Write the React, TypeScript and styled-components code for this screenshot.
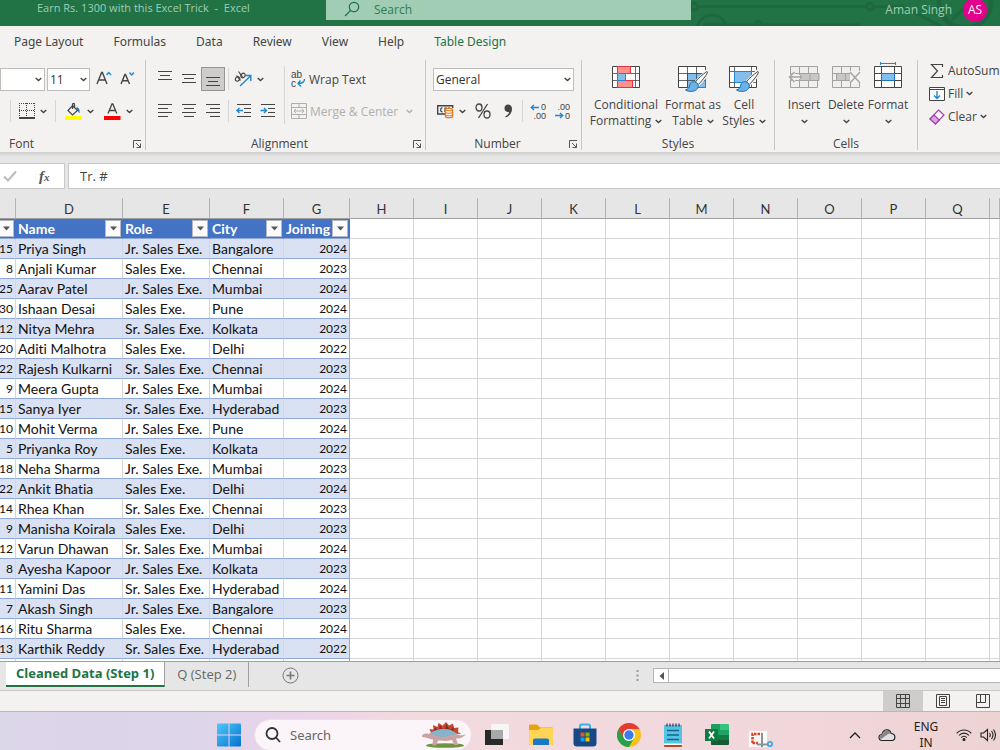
import React from "react";
import styled, { createGlobalStyle } from "styled-components";

const ui = `"Noto Sans", "Open Sans", "Liberation Sans", sans-serif`;
const narrowUi = `"Open Sans", "Noto Sans", "Liberation Sans", sans-serif`;
const sheet = `Lato, "Open Sans", "Liberation Sans", sans-serif`;

const GlobalStyle = createGlobalStyle`
  *, *::before, *::after { box-sizing: border-box; }
  body { margin: 0; overflow: hidden; font-family: ${ui}; font-size: 12px; color: #444; }
  button, input, select { font: inherit; color: inherit; margin: 0; }
  button { border: 0; background: none; padding: 0; cursor: pointer; }
  svg { display: block; flex: none; }
`;

const Window = styled.div`
  display: flex;
  flex-direction: column;
  height: 100vh;
  overflow: hidden;
  background: #e6e6e6;
`;

/* ---------- Title bar ---------- */
const TitleBar = styled.header`
  position: relative;
  display: flex;
  flex: none;
  align-items: flex-start;
  height: 26px;
  overflow: hidden;
  background: #217346;
  color: #a0cdb4;
  font-family: ${narrowUi};
  font-size: 12px;
  line-height: 16px;
`;
const Circuit = styled.svg`
  position: absolute;
  top: 0;
  right: 0;
`;
const DocTitle = styled.div`
  flex: 0 0 326px;
  padding-left: 37px;
  font-size: 11px;
  white-space: pre;
`;
const SearchField = styled.label`
  position: relative;
  display: flex;
  flex: 0 1 365px;
  align-items: center;
  gap: 14px;
  height: 20px;
  padding: 0 0 2px 18px;
  background: #a0cdb4;
  color: #217346;
  input {
    min-width: 0;
    height: 18px;
    flex: 1;
    padding: 0;
    border: 0;
    outline: 0;
    background: none;
  }
  input::placeholder { color: #2f7d52; opacity: 1; }
`;
const Account = styled.button`
  position: relative;
  display: flex;
  align-items: center;
  gap: 11px;
  height: 20px;
  margin-left: auto;
  padding-right: 13px;
`;
const Avatar = styled.span`
  width: 24px;
  height: 24px;
  border-radius: 50%;
  background: #e3008c;
  color: #fff;
  line-height: 24px;
  text-align: center;
`;

/* ---------- Ribbon ---------- */
const RibbonTabs = styled.nav`
  display: flex;
  flex: none;
  gap: 30px;
  height: 32px;
  padding: 0 0 2px 14px;
  background: #f3f2f1;
`;
const RibbonTab = styled.button<{ $active?: boolean }>`
  color: ${(p) => (p.$active ? "#217346" : "#444")};
  white-space: nowrap;
`;
const Ribbon = styled.section`
  display: flex;
  flex: none;
  height: 94px;
  padding-top: 2px;
  background: #f3f2f1;
  font-family: ${narrowUi};
`;
const RibbonEdge = styled.div`
  flex: none;
  height: 5px;
  background: linear-gradient(#cfcecd, #e6e6e6);
`;
const Group = styled.div<{ $w?: number }>`
  display: flex;
  flex-direction: column;
  flex: ${(p) => (p.$w ? `0 0 ${p.$w}px` : "1 0 0")};
  height: 90px;
  border-right: ${(p) => (p.$w ? "1px solid #c8c6c4" : "0")};
  white-space: nowrap;
`;
const GroupBody = styled.div<{ $pad?: number }>`
  display: flex;
  flex: none;
  height: 77px;
  padding-left: ${(p) => p.$pad ?? 8}px;
`;
const GroupFoot = styled.div<{ $shift?: boolean }>`
  display: flex;
  align-items: center;
  height: 14px;
  line-height: 14px;
  span {
    flex: 1;
    text-align: ${(p) => (p.$shift ? "left" : "center")};
    padding-left: ${(p) => (p.$shift ? "9px" : "0")};
  }
  svg { margin-right: 3px; }
`;
const Rows = styled.div`
  display: flex;
  flex-direction: column;
  gap: 8px;
  padding-top: 7px;
`;
const Row = styled.div<{ $gap?: number }>`
  display: flex;
  align-items: center;
  gap: ${(p) => p.$gap ?? 0}px;
  height: 24px;
`;
const Tool = styled.button<{ $w?: number; $on?: boolean }>`
  display: flex;
  flex: none;
  align-items: center;
  justify-content: center;
  gap: 5px;
  width: ${(p) => p.$w ?? 24}px;
  height: 24px;
  border: 1px solid ${(p) => (p.$on ? "#979593" : "transparent")};
  background: ${(p) => (p.$on ? "#cfcdcb" : "none")};
`;
const TextTool = styled.button`
  display: flex;
  align-items: center;
  gap: 3px;
  height: 24px;
  &:disabled { color: #b1afad; }
`;
const Rule = styled.span<{ $h?: number }>`
  flex: none;
  width: 1px;
  height: ${(p) => p.$h ?? 22}px;
  margin: 0 3px;
  background: #d8d6d4;
`;
const TallRule = styled.span`
  width: 1px;
  height: 58px;
  margin: 6px 6px 0 4px;
  background: #d8d6d4;
`;
const Picker = styled.label<{ $w: number }>`
  display: grid;
  align-items: center;
  width: ${(p) => p.$w}px;
  height: 23px;
  border: 1px solid #c0bebc;
  background: #fff;
  > * { grid-area: 1 / 1; }
  > svg { justify-self: end; margin-right: 2px; pointer-events: none; }
  select {
    width: 100%;
    height: 21px;
    padding: 0 2px;
    border: 0;
    outline: 0;
    appearance: none;
    background: none;
    color: #333;
  }
`;
const BigTool = styled.button<{ $w: number }>`
  display: flex;
  flex-direction: column;
  align-items: center;
  width: ${(p) => p.$w}px;
  height: 72px;
  padding-top: 2px;
  line-height: 16px;
  > svg { margin-bottom: 5px; }
`;
const Line = styled.span`
  display: flex;
  align-items: center;
  gap: 4px;
  height: 16px;
`;
const EditList = styled.div`
  display: flex;
  flex-direction: column;
  padding-left: 11px;
`;
const EditTool = styled.button`
  display: flex;
  align-items: center;
  gap: 3px;
  height: 23px;
  padding-bottom: 2px;
`;

/* ---------- Formula bar ---------- */
const FormulaBar = styled.div`
  display: flex;
  flex: none;
  gap: 3px;
  height: 41px;
  padding: 6px 0 9px;
`;
const FormulaTools = styled.div`
  display: flex;
  align-items: center;
  gap: 22px;
  width: 65px;
  padding-left: 3px;
  border: 1px solid #c8c8c8;
  border-left: 0;
  background: #fff;
`;
const FxButton = styled.button`
  font: italic bold 15px "Liberation Serif", serif;
  color: #555;
  small { font-size: 11px; }
`;
const FormulaInput = styled.input`
  flex: 1;
  min-width: 0;
  padding: 0 11px;
  border: 1px solid #c8c8c8;
  border-right: 0;
  outline: 0;
  background: #fff;
  && { font: 13px ${narrowUi}; }
`;

/* ---------- Grid ---------- */
const SheetArea = styled.main`
  flex: 1;
  min-height: 0;
  overflow: hidden;
  background: #fff;
`;
const Sheet = styled.table`
  width: 100%;
  table-layout: fixed;
  border-collapse: separate;
  border-spacing: 0;
  font-family: ${sheet};
  font-size: 14px;
  font-variant-ligatures: none;
  color: #111;
  th, td {
    height: 20px;
    padding: 1px 2px 0;
    border-right: 1px solid #d6d6d6;
    border-bottom: 1px solid #d6d6d6;
    line-height: 18px;
    overflow: hidden;
    white-space: nowrap;
  }
`;
const ColumnHead = styled.th`
  && {
    height: 21px;
    border-right-color: #b4b4b4;
    border-bottom-color: #9f9f9f;
    background: #e6e6e6;
    color: #333;
    font-size: 13px;
    font-weight: 400;
    text-align: center;
  }
`;
const FieldHead = styled.th`
  && {
    border-color: #4472c4;
    border-bottom-color: #8ea9db;
    padding: 1px 1px 1px 2px;
    background: #4472c4;
    color: #fff;
    text-align: left;
  }
  > div {
    display: flex;
    align-items: center;
    justify-content: flex-end;
    height: 17px;
  }
  span { flex: 1; }
`;
const FilterButton = styled.button`
  display: grid;
  flex: none;
  place-items: center;
  width: 16px;
  height: 17px;
  border: 1px solid #b5b9c4;
  background: #fbfbfb;
`;
const DataCell = styled.td<{ $band: boolean; $edge?: boolean }>`
  && {
    border-bottom-color: #8ea9db;
    border-right-color: ${(p) => (p.$edge ? "#8ea9db" : p.$band ? "#cfd8ea" : "#d6d6d6")};
    background: ${(p) => (p.$band ? "#d9e1f2" : "#fff")};
  }
`;
const NumberCell = styled(DataCell)`
  font-size: 12px;
  > span { display: flex; justify-content: flex-end; }
`;

/* ---------- Sheet tabs and status bar ---------- */
const SheetTabs = styled.div`
  display: flex;
  flex: none;
  align-items: flex-start;
  height: 29px;
  padding-left: 6px;
  border-top: 1px solid #9f9f9f;
  background: #e6e6e6;
  font-family: ${narrowUi};
`;
const SheetTab = styled.button<{ $active?: boolean }>`
  height: 25px;
  padding: 0 ${(p) => (p.$active ? 10 : 12)}px;
  border-right: 1px solid #9f9f9f;
  border-bottom: ${(p) => (p.$active ? "2px solid #217346" : "0")};
  background: ${(p) => (p.$active ? "#fff" : "none")};
  color: ${(p) => (p.$active ? "#217346" : "#666")};
  font-size: 13px;
  font-weight: ${(p) => (p.$active ? 700 : 400)};
  line-height: 23px;
  white-space: nowrap;
`;
const AddSheet = styled.button`
  margin: 5px 0 0 33px;
`;
const ScrollZone = styled.div`
  display: flex;
  align-items: center;
  flex: 0 0 364px;
  gap: 14px;
  height: 27px;
  margin-left: auto;
`;
const ScrollTrack = styled.div`
  display: flex;
  flex: 1;
  height: 15px;
  border: 1px solid #b4b4b4;
  border-right: 0;
  background: #fff;
`;
const ScrollArrow = styled.button`
  display: grid;
  place-items: center;
  width: 15px;
  border-right: 1px solid #b4b4b4;
`;
const StatusBar = styled.footer`
  display: flex;
  flex: none;
  justify-content: flex-end;
  height: 22px;
  overflow: hidden;
  border-top: 1px solid #c8c8c8;
  border-bottom: 1px solid #bcb6b6;
  background: #f3f2f1;
`;
const ViewButton = styled.button<{ $on?: boolean }>`
  display: grid;
  place-items: center;
  flex: none;
  width: 40px;
  background: ${(p) => (p.$on ? "#cfcdcb" : "none")};
`;
const ViewButtons = styled.div`
  display: flex;
  width: 117px;
  flex: none;
`;

/* ---------- Taskbar ---------- */
const Taskbar = styled.nav`
  display: flex;
  flex: none;
  align-items: flex-start;
  justify-content: space-between;
  height: 38px;
  overflow: hidden;
  background: linear-gradient(90deg, #dcd6e9 0%, #ddd5e9 19%, #ecd4ea 31%, #f3dadf 41%, #f2d9de 65%, #eed3d3 100%);
`;
const Apps = styled.div`
  display: flex;
  align-items: center;
  height: 46px;
  padding-left: 217px;
`;
const SearchPill = styled.label`
  display: flex;
  align-items: center;
  width: 218px;
  height: 32px;
  margin: 0 3px 0 13px;
  padding: 0 4px 0 10px;
  border: 1px solid #eadfe6;
  border-radius: 16px;
  background: #fbf4f8;
  input {
    flex: 1;
    min-width: 0;
    margin-left: 9px;
    padding: 0;
    border: 0;
    outline: 0;
    background: none;
    font-size: 13px;
  }
  input::placeholder { color: #666; opacity: 1; }
`;
const AppButton = styled.button<{ $w?: number }>`
  display: grid;
  place-items: center;
  width: ${(p) => p.$w ?? 44}px;
  height: 44px;
`;
const Tray = styled.div`
  display: flex;
  align-items: center;
  gap: 8px;
  height: 46px;
  padding-right: 3px;
  color: #222;
`;
const Language = styled.button`
  width: 44px;
  line-height: 16px;
`;

/* ---------- Icons ---------- */
const ink = "#444";
const blue = "#1e88d2";

const Chevron = ({ c = ink }: { c?: string }) => (
  <svg width="7" height="5" viewBox="0 0 7 5" fill="none" stroke={c} strokeWidth="1.4">
    <path d="M.7 1 3.5 3.6 6.3 1" />
  </svg>
);
const Launcher = () => (
  <svg width="9" height="9" viewBox="0 0 9 9" fill="none" stroke="#555">
    <path d="M.5 8V.5H8M3 3l4.5 4.5M7.5 3.5v4h-4" />
  </svg>
);
const Lines = ({ rows }: { rows: [number, number, number][] }) => (
  <svg width="16" height="16" viewBox="0 0 16 16" stroke={ink}>
    {rows.map(([y, a, b]) => (
      <path key={y} d={`M${a} ${y}.5H${b}`} />
    ))}
  </svg>
);
const FontSizeIcon = ({ up }: { up?: boolean }) => (
  <svg width="16" height="18" viewBox="0 0 16 18" fill="none">
    {up ? (
      <>
        <path d="m1 14 4.600-11.500h.8L11 14M2.600 10h6.800" stroke={ink} strokeWidth="1.400" />
        <path d="m10.500 5 2.200-2.500L15 5" stroke={blue} strokeWidth="1.400" />
      </>
    ) : (
      <>
        <path d="m1 14 3.900-9.500h.6L9.500 14M2.500 10.700h5.500" stroke={ink} strokeWidth="1.400" />
        <path d="m9.500 2.500 2.200 2.500L14 2.500" stroke={blue} strokeWidth="1.400" />
      </>
    )}
  </svg>
);
const BordersIcon = () => (
  <svg width="16" height="16" viewBox="0 0 16 16" fill="none" stroke={ink}>
    <path d="M0 .5h16M0 7.500h16M.5 0v14M7.500 0v14M15.500 0v14" strokeDasharray="1 1" />
    <path d="M0 15h16" strokeWidth="2" />
  </svg>
);
const FillColorIcon = () => (
  <svg width="17" height="17" viewBox="0 0 17 17" fill="none">
    <path d="m7.500 2.500 5 5-5 4.500-4.500-4.500zM7.500 6V1.500c0-1.500 2-1.500 2 0v3" stroke={ink} strokeWidth="1.200" />
    <path d="M11 4.500c3-.5 4 2 3.500 6-1-1-1.500-3-3.500-6z" fill="#1f6fb5" />
    <path d="M0 13h16.500v4H0z" fill="#ff0" />
  </svg>
);
const FontColorIcon = () => (
  <svg width="17" height="17" viewBox="0 0 17 17" fill="none">
    <path d="m4 10.500 4-9.500h.8l4 9.500M5.300 7.500h6.200" stroke={ink} strokeWidth="1.300" />
    <path d="M0 13h16.500v4H0z" fill="#f00" />
  </svg>
);
const OrientationIcon = () => (
  <svg width="18" height="16" viewBox="0 0 18 16" fill="none">
    <g stroke={ink} strokeWidth="1.200">
      <ellipse cx="3.500" cy="8" rx="2.400" ry="2" transform="rotate(-45 3.500 8)" />
      <path d="m2.500 4.500 4 5" />
      <ellipse cx="9" cy="4.500" rx="2.400" ry="2" transform="rotate(-45 9 4.500)" />
      <path d="m4.500.500 4 5.500" />
    </g>
    <path d="M6 15 16.500 5M11 4.500h5.800v5.500" stroke={blue} strokeWidth="1.400" />
  </svg>
);
const IndentIcon = ({ out }: { out?: boolean }) => (
  <svg width="16" height="14" viewBox="0 0 16 14" fill="none">
    <path d="M1 .5h14M8 4.500h7M8 8.500h7M1 12.500h14" stroke={ink} />
    <path d={out ? "M7 6.500H1M3.500 4 1 6.500 3.500 9" : "M.5 6.500h6M4 4l2.500 2.500L4 9"} stroke={blue} strokeWidth="1.400" />
  </svg>
);
const WrapIcon = () => (
  <svg width="15" height="20" viewBox="0 0 15 20" fill="none">
    <g fontSize="10" fontFamily="Liberation Sans" fill={ink}>
      <text x="0" y="9">ab</text>
      <text x="0" y="18">c</text>
    </g>
    <path d="M13.500 10c0 3-2 4.500-6.500 4.500M9.500 11.500 7 14.500l3 3" stroke={blue} strokeWidth="1.400" />
  </svg>
);
const MergeIcon = () => (
  <svg width="16" height="16" viewBox="0 0 16 16" fill="none" stroke="#b1afad">
    <path d="M.5.500h15v15H.5zM.5 4.500h15M.5 11.500h15M8 .5v4M8 11.500v4M3 8h10M5 6 3 8l2 2M11 6l2 2-2 2" />
  </svg>
);
const AccountingIcon = () => (
  <svg width="17" height="15" viewBox="0 0 17 15" fill="none">
    <path d="M9 10H.7V1.700h15V4" stroke={ink} strokeWidth="1.400" />
    <path d="M5.500 4C3 3.500 3 8 5.500 8M10 4H8v4M13 4h-2" stroke={ink} strokeWidth="1.200" />
    <path d="M8.500 5.500c0-1.500 7-1.500 7 0v7c0 1.500-7 1.500-7 0z" fill="#fff" stroke="#e8761a" strokeWidth="1.400" />
    <path d="M8.500 6c1 1 6 1 7 0M8.500 8.500c1 1 6 1 7 0M8.500 11c1 1 6 1 7 0" stroke="#e8761a" />
  </svg>
);
const PercentIcon = () => (
  <svg width="16" height="16" viewBox="0 0 16 16" fill="none" stroke={ink} strokeWidth="1.300">
    <ellipse cx="4" cy="4.500" rx="3" ry="3.500" />
    <ellipse cx="12" cy="11.500" rx="3" ry="3.500" />
    <path d="M12.500 1 3.500 15" />
  </svg>
);
const CommaIcon = () => (
  <svg width="10" height="14" viewBox="0 0 10 14" fill={ink}>
    <path d="M5 .5a3.800 3.800 0 0 0-.5 7.500c.7.100 1.200 0 1.700-.2C5.800 9.800 4.500 11.300 2.200 12.500l.6 1C6.800 11.800 9 8.700 9 5 9 2.200 7.300.5 5 .5z" />
  </svg>
);
const DecimalIcon = ({ more }: { more?: boolean }) => (
  <svg width="17" height="19" viewBox="0 0 17 19" fill="none">
    <g fontSize="9" fontFamily="Liberation Sans" fill={ink} textAnchor="end">
      <text x="16" y="8">{more ? "0" : ".00"}</text>
      <text x="16" y="17">{more ? ".00" : "0"}</text>
    </g>
    <path d={more ? "M9 5.500H1M4 3 1.300 5.500 4 8" : "M1 13.500h8M6 11l2.700 2.500L6 16"} stroke={blue} strokeWidth="1.400" />
  </svg>
);
const CondIcon = () => (
  <svg width="30" height="30" viewBox="0 0 30 30" fill="none">
    <path d="M1.500 4.500h27v21h-27z" fill="#fff" stroke={ink} />
    <path d="M1.500 11.500h27M1.500 18.500h27M6.500 4.500v21M24.500 4.500v21" stroke={ink} strokeWidth=".8" />
    <path d="M6.500 4.500h13v7h-13zM6.500 18.500h15v7h-15z" fill="#ff9090" stroke="#e8323c" />
    <path d="M6.500 11.500h8v7h-8z" fill="#83beec" stroke={blue} />
  </svg>
);
const Brush = () => (
  <>
    <path d="M30.500 9 20 20l2.500 2.500L32 12z" fill="#fff" stroke="#f3f2f1" strokeWidth="3" />
    <path d="M31 9.500C27 12 21 17.500 19.500 20l2.700 2.500C25 20 30 14 31.500 10.500z" fill="#fff" stroke={ink} />
    <path d="M19 20c-3-1-5 1-5.500 4-.3 2-1.500 3-4 4 3.500 2.500 12 2 12.800-3.500.2-2-1-4-3.300-4.500z" fill="#6db1e5" stroke="#1877bd" />
  </>
);
const FormatTableIcon = () => (
  <svg width="34" height="30" viewBox="0 0 34 30" fill="none">
    <path d="M2.500 4.500h27v21h-27z" fill="#fff" stroke={ink} />
    <path d="M11.500 11.500h18v14h-18z" fill="#83beec" stroke={blue} />
    <path d="M2.500 11.500h27M2.500 18.500h27M11.500 4.500v21M20.500 4.500v21" stroke={ink} strokeWidth=".8" />
    <Brush />
  </svg>
);
const CellStylesIcon = () => (
  <svg width="34" height="30" viewBox="0 0 34 30" fill="none">
    <path d="M2.500 4.500h27v21h-27z" fill="#fff" stroke={ink} />
    <path d="M2.500 9.500h27M2.500 20.500h27M7.500 4.500v21M24.500 4.500v21" stroke={ink} strokeWidth=".8" />
    <path d="M7.500 9.500h17v11h-17z" fill="#83beec" stroke={blue} />
    <Brush />
  </svg>
);
const InsertIcon = () => (
  <svg width="32" height="30" viewBox="0 0 32 30" fill="none" stroke="#a5a3a1">
    <path d="M2.500 4.500h27v21h-27zM2.500 11.500h27M2.500 18.500h27M11.500 4.500v21M20.500 4.500v21" fill="#f0efee" />
    <path d="M12 11.500h19v7H12zM22 11.500v7" fill="#c8c6c4" />
    <path d="M12 13H7V8.500L0 15l7 6.500V17h5z" fill="#f3f2f1" stroke="none" />
    <path d="M14 15H1M6.500 10 1.500 15l5 5" strokeWidth="1.500" />
  </svg>
);
const DeleteIcon = () => (
  <svg width="32" height="30" viewBox="0 0 32 30" fill="none" stroke="#a5a3a1">
    <path d="M2.500 4.500h27v21h-27zM2.500 11.500h27M2.500 18.500h27M11.500 4.500v21M20.500 4.500v21" fill="#f0efee" />
    <path d="M6.500 11.500h14v7h-14zM15.500 11.500v7" fill="#c8c6c4" />
    <path d="M20 9h11v12H20z" fill="#f3f2f1" stroke="none" />
    <path d="m20 10 10 11M30 10 20 21" strokeWidth="1.400" />
  </svg>
);
const FormatIcon = () => (
  <svg width="32" height="30" viewBox="0 0 32 30" fill="none">
    <path d="M2.500 4.500h27v21h-27z" fill="#fff" stroke={ink} />
    <path d="M2.500 11.500h27M2.500 18.500h27M9.500 4.500v21M22.500 4.500v21" stroke={ink} />
    <path d="M9.500 11.500h13v7h-13z" fill="#83beec" stroke="#1877bd" />
    <path d="M8.500 1.500h15M8.500 0v3M23.500 0v3" stroke={blue} />
  </svg>
);
const SumIcon = () => (
  <svg width="16" height="16" viewBox="0 0 16 16" fill="none" stroke={ink} strokeWidth="1.200">
    <path d="M13.500 4V1.500H2.500L8.500 8l-6 6.500h11V12" />
  </svg>
);
const FillIcon = () => (
  <svg width="16" height="16" viewBox="0 0 16 16" fill="none">
    <path d="M.5 1.500h15v13H.5zM.5 3.500h15" stroke={ink} fill="#fff" />
    <path d="M8 5v7.500M5 9.500l3 3 3-3" stroke={blue} strokeWidth="1.400" />
  </svg>
);
const ClearIcon = () => (
  <svg width="16" height="16" viewBox="0 0 16 16" stroke="#a33fb0" strokeWidth="1.200">
    <path d="M9.500 1 15 6l-8.500 9L1 10z" fill="#fff" />
    <path d="M5 6l5.300 5-3.800 4L1 10z" fill="#dca6e2" />
  </svg>
);
const GridView = () => (
  <svg width="14" height="14" viewBox="0 0 14 14" fill="none" stroke={ink}>
    <path d="M.5.500h13v13H.5zM.5 4.500h13M.5 9.500h13M4.500.5v13M9.500.5v13" />
  </svg>
);
const PageView = () => (
  <svg width="14" height="14" viewBox="0 0 14 14" fill="none" stroke={ink}>
    <path d="M.5.500h13v13H.5zM3.500 2.500h7v9h-7zM5 4.500h4M5 6.500h4M5 8.500h4" />
  </svg>
);
const BreakView = () => (
  <svg width="14" height="14" viewBox="0 0 14 14" fill="none" stroke={ink}>
    <path d="M.5.500h13v13H.5zM.5 8.500h9V.5M4.500.5v8" />
  </svg>
);
const WindowsIcon = () => (
  <svg width="24" height="24" viewBox="0 0 24 24">
    <defs>
      <linearGradient id="win" x1="0" y1="0" x2="1" y2="1">
        <stop stopColor="#4fc8fb" />
        <stop offset="1" stopColor="#0671cf" />
      </linearGradient>
    </defs>
    <path d="M0 1.500Q0 .5 1 .5h10.500v11H0zM12.500.5H23q1 0 1 1v10H12.500zM0 12.500h11.500v11H1q-1 0-1-1zM12.500 12.500H24v10q0 1-1 1H12.500z" fill="url(#win)" />
  </svg>
);
const Magnifier = () => (
  <svg width="16" height="16" viewBox="0 0 16 16" fill="none" stroke="#333" strokeWidth="1.800">
    <circle cx="7" cy="6.500" r="5.500" />
    <path d="m11 10.500 4 4.500" />
  </svg>
);
const Stegosaurus = () => (
  <svg width="46" height="26" viewBox="0 0 46 26">
    <ellipse cx="24" cy="23.500" rx="19" ry="2.300" fill="#6f9440" />
    <path d="M10 11 8.500 7l4 .5L12 3l4.500 2L17.500.8l4 3L25 0l3 3.600L32 1.500l1 4.500 4.500-.5L37 10l3 2z" fill="#c2492f" />
    <path d="m13 9 1-4 3 4zM18 8l1-5 3 4.500zM24 7l1.500-5L28 7zM30 8l2-4 1 5z" fill="#8a2c22" />
    <path d="M1 13.500c2-2 4-2.500 7-1.500 5-4.500 20-7.500 27 0 3 1.500 7 2 10 0-2 3-6 5-10 4.500l2 6.500h-3.500l-2.500-5-6 1-8-.5-2 5h-3.500l.5-6c-3-.5-6-2-11-2.500z" fill="#c9a2a4" />
    <path d="M9 11.500C16 5.500 29 5 36 12c-7 1-9 2.500-14 3-5 0-8-1-13-3.500z" fill="#86b3cc" />
  </svg>
);
const TaskViewIcon = () => (
  <svg width="24" height="24" viewBox="0 0 24 24">
    <path d="M0 7h18v15H0z" fill="#292929" />
    <path d="M6 1h18v15H6z" fill="#f7f7f7" opacity=".9" />
    <path d="M6 7h12v9H6z" fill="#a9a9a9" />
  </svg>
);
const FolderIcon = () => (
  <svg width="24" height="24" viewBox="0 0 24 24">
    <path d="M0 2.500Q0 1.500 1 1.500h7l3 3h12q1 0 1 1V22H0z" fill="#e3a40e" />
    <path d="M0 7h9l3-2h11q1 0 1 1v15q0 1-1 1H1q-1 0-1-1z" fill="#ffd457" />
    <path d="M4 22v-5q0-1.500 2-1.500h12q2 0 2 1.500v5z" fill="#1979c6" />
  </svg>
);
const StoreIcon = () => (
  <svg width="24" height="24" viewBox="0 0 24 24">
    <path d="M7 6V3q0-1.500 1.500-1.500h7Q17 1.500 17 3v3" fill="none" stroke="#35b3ed" strokeWidth="2" />
    <path d="M.5 5.500h23V20q0 3.500-3.500 3.500H4Q.5 23.500.5 20z" fill="#174a85" />
    <path d="M7.500 9.500h4v4h-4z" fill="#f25022" />
    <path d="M12.500 9.500h4v4h-4z" fill="#7fba00" />
    <path d="M7.500 14.500h4v4h-4z" fill="#00a4ef" />
    <path d="M12.500 14.500h4v4h-4z" fill="#ffb900" />
  </svg>
);
const ChromeIcon = () => (
  <svg width="24" height="24" viewBox="0 0 24 24">
    <circle cx="12" cy="12" r="12" fill="#fbc116" />
    <path d="M1.600 6A12 12 0 0 1 22.400 6H12L6.800 15z" fill="#e33b2e" />
    <path d="M1.600 6A12 12 0 0 0 12 24l5.200-9L12 12 6.800 15z" fill="#2b9f4b" />
    <circle cx="12" cy="12" r="6" fill="#fff" />
    <circle cx="12" cy="12" r="4.700" fill="#3b7ced" />
  </svg>
);
const NotepadIcon = () => (
  <svg width="20" height="24" viewBox="0 0 20 24">
    <path d="M1 2h18v20H1z" fill="#55c3e3" />
    <path d="M1 21.500h18V23q0 1-1 1H2q-1 0-1-1z" fill="#a4521f" />
    <path d="M1 20.500h18v1.500H1z" fill="#fff" />
    <path d="M4 7.500h12M4 12h12M4 16.500h12" stroke="#14648c" strokeWidth="1.500" />
    <path d="M4 .5v3M7 .5v3M10 .5v3M13 .5v3M16 .5v3" stroke="#235" strokeWidth="1.200" />
  </svg>
);
const ExcelIcon = () => (
  <svg width="24" height="24" viewBox="0 0 24 24">
    <path d="M6 2q0-1 1-1h8v21H7q-1 0-1-1z" fill="#1b9e60" />
    <path d="M15 1h8q1 0 1 1v5h-9z" fill="#33c481" />
    <path d="M15 7h9v5h-9z" fill="#21a366" />
    <path d="M15 12h9v5h-9zM6 12h9v5H6z" fill="#107c41" />
    <path d="M6 17h18v4q0 1-1 1H7q-1 0-1-1z" fill="#185c37" />
    <path d="M0 6h13v12H0z" fill="#107c41" />
    <path d="m4 8.500 5 7M9 8.500l-5 7" stroke="#fff" strokeWidth="1.800" />
  </svg>
);
const SnipIcon = () => (
  <svg width="24" height="24" viewBox="0 0 24 24" fill="none">
    <path d="M0 8h18v16H0z" fill="#fafafa" />
    <path d="M3.500 20V11H13" stroke="#dc4322" strokeWidth="2.500" strokeDasharray="2.500 1" />
    <path d="M3.500 20H9" stroke="#dc4322" strokeWidth="2.500" strokeDasharray="2.500 1" />
    <path d="M13 10v11.500h6M8 21.500h6M13 19v5" stroke="#8c9298" strokeWidth="2" />
    <circle cx="21" cy="21" r="2.200" stroke="#32a4e6" strokeWidth="1.600" />
  </svg>
);
const CaretUp = () => (
  <svg width="12" height="8" viewBox="0 0 12 8" fill="none" stroke="#222" strokeWidth="1.300">
    <path d="m1 7 5-5 5 5" />
  </svg>
);
const CloudIcon = () => (
  <svg width="18" height="14" viewBox="0 0 18 14">
    <path d="M4 12.500C0 12.500 0 6.500 4 6.500 5 .5 12 .5 13 5.500c5 0 5 7 1 7z" fill="#e4e0e1" stroke="#222" strokeWidth="1.200" />
    <path d="M4 6.500C5 1.500 11 .8 12.800 5.500 9 5.500 8 8 3 11 .8 10 1 7 4 6.500z" fill="#888" />
  </svg>
);
const WifiIcon = () => (
  <svg width="16" height="14" viewBox="0 0 16 14" fill="none" stroke="#222" strokeWidth="1.100">
    <path d="M.7 5.300c4-4.500 10.600-4.500 14.600 0M3 7.500c2.800-3.200 7.200-3.200 10 0M5.200 9.700c1.700-1.900 3.900-1.900 5.600 0" />
    <circle cx="8" cy="11.500" r="1" fill="#222" />
  </svg>
);
const SpeakerIcon = () => (
  <svg width="17" height="14" viewBox="0 0 17 14" fill="none" stroke="#222" strokeWidth="1.100">
    <path d="M1 5h2.500L7.500 1.500v11L3.500 9H1zM9.500 5q1.500 2 0 4M11.500 3q3 4 0 8M13.500 1.500q4 5.500 0 11" />
  </svg>
);

/* ---------- Data ---------- */
const rows: [number, string, string, string, number][] = [
  [15, "Priya Singh", "Jr. Sales Exe.", "Bangalore", 2024],
  [8, "Anjali Kumar", "Sales Exe.", "Chennai", 2023],
  [25, "Aarav Patel", "Jr. Sales Exe.", "Mumbai", 2024],
  [30, "Ishaan Desai", "Sales Exe.", "Pune", 2024],
  [12, "Nitya Mehra", "Sr. Sales Exe.", "Kolkata", 2023],
  [20, "Aditi Malhotra", "Sales Exe.", "Delhi", 2022],
  [22, "Rajesh Kulkarni", "Sr. Sales Exe.", "Chennai", 2023],
  [9, "Meera Gupta", "Jr. Sales Exe.", "Mumbai", 2024],
  [15, "Sanya Iyer", "Sr. Sales Exe.", "Hyderabad", 2023],
  [10, "Mohit Verma", "Jr. Sales Exe.", "Pune", 2024],
  [5, "Priyanka Roy", "Sales Exe.", "Kolkata", 2022],
  [18, "Neha Sharma", "Jr. Sales Exe.", "Mumbai", 2023],
  [22, "Ankit Bhatia", "Sales Exe.", "Delhi", 2024],
  [14, "Rhea Khan", "Sr. Sales Exe.", "Chennai", 2023],
  [9, "Manisha Koirala", "Sales Exe.", "Delhi", 2023],
  [12, "Varun Dhawan", "Sr. Sales Exe.", "Mumbai", 2024],
  [8, "Ayesha Kapoor", "Jr. Sales Exe.", "Kolkata", 2023],
  [11, "Yamini Das", "Sr. Sales Exe.", "Hyderabad", 2024],
  [7, "Akash Singh", "Jr. Sales Exe.", "Bangalore", 2023],
  [16, "Ritu Sharma", "Sales Exe.", "Chennai", 2024],
  [13, "Karthik Reddy", "Sr. Sales Exe.", "Hyderabad", 2022],
];
const letters = ["", "D", "E", "F", "G", "H", "I", "J", "K", "L", "M", "N", "O", "P", "Q", ""];
const widths = [16, 107, 87, 74, 66, ...Array(10).fill(64)];
const fields = ["", "Name", "Role", "City", "Joining"];
const tabs = ["Page Layout", "Formulas", "Data", "Review", "View", "Help", "Table Design"];
const blanks = Array.from({ length: 11 }, (_, i) => <td key={i} />);

const apps: [string, React.ReactNode][] = [
  ["Task view", <TaskViewIcon />],
  ["File Explorer", <FolderIcon />],
  ["Microsoft Store", <StoreIcon />],
  ["Chrome", <ChromeIcon />],
  ["Notepad", <NotepadIcon />],
  ["Excel", <ExcelIcon />],
  ["Snipping Tool", <SnipIcon />],
];

const RibbonBar = () => (
  <Ribbon>
    <Group $w={146}>
      <GroupBody $pad={0}>
        <Rows>
          <Row $gap={2}>
            <Picker $w={45}>
              <select aria-label="Font"><option></option></select>
              <Chevron />
            </Picker>
            <Picker $w={43}>
              <select aria-label="Font size"><option>11</option></select>
              <Chevron />
            </Picker>
            <Tool aria-label="Increase font size"><FontSizeIcon up /></Tool>
            <Tool $w={20} aria-label="Decrease font size"><FontSizeIcon /></Tool>
          </Row>
          <Row>
            <Rule $h={0} />
            <Rule />
            <Tool $w={38} aria-label="Borders"><BordersIcon /><Chevron /></Tool>
            <Rule />
            <Tool $w={40} aria-label="Fill colour"><FillColorIcon /><Chevron /></Tool>
            <Tool $w={38} aria-label="Font colour"><FontColorIcon /><Chevron /></Tool>
          </Row>
        </Rows>
      </GroupBody>
      <GroupFoot $shift><span>Font</span><Launcher /></GroupFoot>
    </Group>

    <Group $w={280}>
      <GroupBody $pad={7}>
        <Rows>
          <Row>
            <Tool aria-label="Top align"><Lines rows={[[0, 1, 15], [4, 3, 13], [8, 1, 15]]} /></Tool>
            <Tool aria-label="Middle align"><Lines rows={[[3, 1, 15], [7, 3, 13], [11, 1, 15]]} /></Tool>
            <Tool $on aria-label="Bottom align"><Lines rows={[[6, 1, 15], [10, 3, 13], [14, 1, 15]]} /></Tool>
            <Rule />
            <Tool $w={34} aria-label="Orientation"><OrientationIcon /><Chevron /></Tool>
          </Row>
          <Row>
            <Tool aria-label="Align left"><Lines rows={[[1, 1, 15], [5, 1, 11], [9, 1, 15], [13, 1, 11]]} /></Tool>
            <Tool aria-label="Centre"><Lines rows={[[1, 1, 15], [5, 3, 13], [9, 1, 15], [13, 3, 13]]} /></Tool>
            <Tool aria-label="Align right"><Lines rows={[[1, 1, 15], [5, 5, 15], [9, 1, 15], [13, 5, 15]]} /></Tool>
            <Rule />
            <Tool aria-label="Decrease indent"><IndentIcon out /></Tool>
            <Tool aria-label="Increase indent"><IndentIcon /></Tool>
          </Row>
        </Rows>
        <TallRule />
        <Rows>
          <Row><TextTool><WrapIcon />Wrap Text</TextTool></Row>
          <Row $gap={8}>
            <TextTool disabled><MergeIcon />Merge &amp; Center</TextTool>
            <Chevron c="#b1afad" />
          </Row>
        </Rows>
      </GroupBody>
      <GroupFoot><span>Alignment</span><Launcher /></GroupFoot>
    </Group>

    <Group $w={156}>
      <GroupBody $pad={7}>
        <Rows>
          <Row>
            <Picker $w={141}>
              <select aria-label="Number format"><option>General</option></select>
              <Chevron />
            </Picker>
          </Row>
          <Row>
            <Tool $w={36} aria-label="Accounting format"><AccountingIcon /><Chevron /></Tool>
            <Tool $w={28} aria-label="Percent style"><PercentIcon /></Tool>
            <Tool $w={22} aria-label="Comma style"><CommaIcon /></Tool>
            <Rule />
            <Tool aria-label="Increase decimal"><DecimalIcon more /></Tool>
            <Tool aria-label="Decrease decimal"><DecimalIcon /></Tool>
          </Row>
        </Rows>
      </GroupBody>
      <GroupFoot><span>Number</span><Launcher /></GroupFoot>
    </Group>

    <Group $w={193}>
      <GroupBody $pad={7}>
        <BigTool $w={74}><CondIcon /><Line>Conditional</Line><Line>Formatting <Chevron /></Line></BigTool>
        <BigTool $w={60}><FormatTableIcon /><Line>Format as</Line><Line>Table <Chevron /></Line></BigTool>
        <BigTool $w={42}><CellStylesIcon /><Line>Cell</Line><Line>Styles <Chevron /></Line></BigTool>
      </GroupBody>
      <GroupFoot><span>Styles</span></GroupFoot>
    </Group>

    <Group $w={143}>
      <GroupBody>
        <BigTool $w={42}><InsertIcon /><Line>Insert</Line><Line><Chevron /></Line></BigTool>
        <BigTool $w={42}><DeleteIcon /><Line>Delete</Line><Line><Chevron /></Line></BigTool>
        <BigTool $w={42}><FormatIcon /><Line>Format</Line><Line><Chevron /></Line></BigTool>
      </GroupBody>
      <GroupFoot><span>Cells</span></GroupFoot>
    </Group>

    <Group>
      <EditList>
        <EditTool><SumIcon />AutoSum</EditTool>
        <EditTool><FillIcon />Fill <Chevron /></EditTool>
        <EditTool><ClearIcon />Clear <Chevron /></EditTool>
      </EditList>
    </Group>
  </Ribbon>
);

const Grid = () => (
  <SheetArea>
    <Sheet>
      <colgroup>
        {widths.map((w, i) => <col key={i} width={w} />)}
        <col />
      </colgroup>
      <thead>
        <tr>{letters.map((l, i) => <ColumnHead key={i}>{l}</ColumnHead>)}</tr>
      </thead>
      <tbody>
        <tr>
          {fields.map((f) => (
            <FieldHead key={f} scope="col">
              <div>
                {f && <span>{f}</span>}
                <FilterButton aria-label={`Filter ${f}`}>
                  <svg width="7" height="5" viewBox="0 0 7 5"><path d="M0 .5h7L3.500 4.500z" fill="#555" /></svg>
                </FilterButton>
              </div>
            </FieldHead>
          ))}
          {blanks}
        </tr>
        {rows.map(([n, name, role, city, year], i) => {
          const band = i % 2 === 0;
          return (
            <tr key={i}>
              <NumberCell $band={band}><span>{n}</span></NumberCell>
              <DataCell $band={band}>{name}</DataCell>
              <DataCell $band={band}>{role}</DataCell>
              <DataCell $band={band}>{city}</DataCell>
              <NumberCell $band={band} $edge><span>{year}</span></NumberCell>
              {blanks}
            </tr>
          );
        })}
        <tr>
          {[0, 1, 2, 3].map((k) => <DataCell key={k} $band={false} />)}
          <DataCell $band={false} $edge />
          {blanks}
        </tr>
      </tbody>
    </Sheet>
  </SheetArea>
);

export default function App() {
  return (
    <Window>
      <GlobalStyle />
      <TitleBar>
        <Circuit width="340" height="26" viewBox="0 0 340 26" fill="none" stroke="#1f673f" strokeWidth="3">
          <path d="M38 6.500h168M214 6.500h28l40 20M60 25h140" />
          <circle cx="210" cy="6.500" r="3.500" />
          <circle cx="34" cy="6.500" r="3.500" />
          <circle cx="98" cy="24" r="3" />
          <circle cx="52" cy="30" r="15" />
          <path d="M43 24h17" />
          <circle cx="305" cy="2" r="26" strokeWidth="5" />
          <path d="m292 20 20-20" />
        </Circuit>
        <DocTitle>{"Earn Rs. 1300 with this Excel Trick  -  Excel"}</DocTitle>
        <SearchField>
          <svg width="16" height="16" viewBox="0 0 16 16" fill="none" stroke="#217346" strokeWidth="1.200">
            <circle cx="10" cy="6" r="4.700" />
            <path d="M6.500 9.500 1 15" />
          </svg>
          <input aria-label="Search" placeholder="Search" />
        </SearchField>
        <Account>Aman Singh<Avatar>AS</Avatar></Account>
      </TitleBar>
      <RibbonTabs>
        {tabs.map((t) => <RibbonTab key={t} $active={t === "Table Design"}>{t}</RibbonTab>)}
      </RibbonTabs>
      <RibbonBar />
      <RibbonEdge />
      <FormulaBar>
        <FormulaTools>
          <svg width="14" height="12" viewBox="0 0 14 12" fill="none" stroke="#bbb" strokeWidth="2">
            <path d="m1 6.500 4 4L13 1.500" />
          </svg>
          <FxButton aria-label="Insert function">f<small>x</small></FxButton>
        </FormulaTools>
        <FormulaInput aria-label="Formula" defaultValue="Tr. #" />
      </FormulaBar>
      <Grid />
      <SheetTabs>
        <SheetTab $active>Cleaned Data (Step 1)</SheetTab>
        <SheetTab>Q (Step 2)</SheetTab>
        <AddSheet aria-label="New sheet">
          <svg width="17" height="17" viewBox="0 0 17 17" fill="none" stroke="#777">
            <circle cx="8.500" cy="8.500" r="7.500" />
            <path d="M8.500 4.500v8M4.500 8.500h8" strokeWidth="1.600" />
          </svg>
        </AddSheet>
        <ScrollZone>
          <svg width="3" height="11" viewBox="0 0 3 11" fill="#999">
            <path d="M.5 0h2v2h-2zM.5 4.500h2v2h-2zM.5 9h2v2h-2z" />
          </svg>
          <ScrollTrack>
            <ScrollArrow aria-label="Scroll left">
              <svg width="5" height="8" viewBox="0 0 5 8"><path d="M5 0v8L.5 4z" fill="#555" /></svg>
            </ScrollArrow>
          </ScrollTrack>
        </ScrollZone>
      </SheetTabs>
      <StatusBar>
        <ViewButtons>
          <ViewButton $on aria-label="Normal view"><GridView /></ViewButton>
          <ViewButton aria-label="Page layout view"><PageView /></ViewButton>
          <ViewButton aria-label="Page break preview"><BreakView /></ViewButton>
        </ViewButtons>
      </StatusBar>
      <Taskbar>
        <Apps>
          <AppButton $w={24} aria-label="Start"><WindowsIcon /></AppButton>
          <SearchPill>
            <Magnifier />
            <input aria-label="Search Windows" placeholder="Search" />
            <Stegosaurus />
          </SearchPill>
          {apps.map(([name, icon]) => <AppButton key={name} aria-label={name}>{icon}</AppButton>)}
        </Apps>
        <Tray>
          <AppButton $w={30} aria-label="Hidden icons"><CaretUp /></AppButton>
          <AppButton $w={18} aria-label="OneDrive"><CloudIcon /></AppButton>
          <Language>ENG<br />IN</Language>
          <WifiIcon />
          <SpeakerIcon />
        </Tray>
      </Taskbar>
    </Window>
  );
}
